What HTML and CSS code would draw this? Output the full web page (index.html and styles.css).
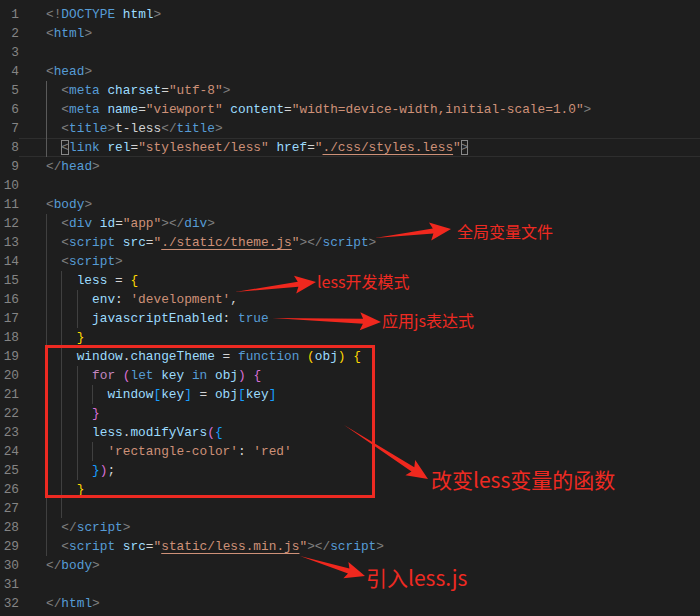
FILE: index.html
```
<!DOCTYPE html>
<html>

<head>
  <meta charset="utf-8">
  <title>t-less</title>
  <link rel="stylesheet" href="styles.css">
</head>

<body>
  <div class="editor">
    <div class="line"><span class="ln">1</span><span class="code"><span class="p">&lt;!</span><span class="t">DOCTYPE</span> <span class="a">html</span><span class="p">&gt;</span></span></div>
    <div class="line"><span class="ln">2</span><span class="code"><span class="p">&lt;</span><span class="t">html</span><span class="p">&gt;</span></span></div>
    <div class="line"><span class="ln">3</span><span class="code"></span></div>
    <div class="line"><span class="ln">4</span><span class="code"><span class="p">&lt;</span><span class="t">head</span><span class="p">&gt;</span></span></div>
    <div class="line"><span class="ln">5</span><span class="code"><i class="g g-on"></i><span class="p">&lt;</span><span class="t">meta</span> <span class="a">charset</span>=<span class="s">"utf-8"</span><span class="p">&gt;</span></span></div>
    <div class="line"><span class="ln">6</span><span class="code"><i class="g g-on"></i><span class="p">&lt;</span><span class="t">meta</span> <span class="a">name</span>=<span class="s">"viewport"</span> <span class="a">content</span>=<span class="s">"width=device-width,initial-scale=1.0"</span><span class="p">&gt;</span></span></div>
    <div class="line"><span class="ln">7</span><span class="code"><i class="g g-on"></i><span class="p">&lt;</span><span class="t">title</span><span class="p">&gt;</span>t-less<span class="p">&lt;/</span><span class="t">title</span><span class="p">&gt;</span></span></div>
    <div class="line cur"><span class="ln">8</span><span class="code"><i class="g g-on"></i><span class="p match">&lt;</span><span class="t">link</span> <span class="a">rel</span>=<span class="s">"stylesheet/less"</span> <span class="a">href</span>=<span class="s">"<span class="u">./css/styles.less</span>"</span><span class="p match">&gt;</span></span></div>
    <div class="line"><span class="ln">9</span><span class="code"><span class="p">&lt;/</span><span class="t">head</span><span class="p">&gt;</span></span></div>
    <div class="line"><span class="ln">10</span><span class="code"></span></div>
    <div class="line"><span class="ln">11</span><span class="code"><span class="p">&lt;</span><span class="t">body</span><span class="p">&gt;</span></span></div>
    <div class="line"><span class="ln">12</span><span class="code"><i class="g"></i><span class="p">&lt;</span><span class="t">div</span> <span class="a">id</span>=<span class="s">"app"</span><span class="p">&gt;&lt;/</span><span class="t">div</span><span class="p">&gt;</span></span></div>
    <div class="line"><span class="ln">13</span><span class="code"><i class="g"></i><span class="p">&lt;</span><span class="t">script</span> <span class="a">src</span>=<span class="s">"<span class="u">./static/theme.js</span>"</span><span class="p">&gt;&lt;/</span><span class="t">script</span><span class="p">&gt;</span></span></div>
    <div class="line"><span class="ln">14</span><span class="code"><i class="g"></i><span class="p">&lt;</span><span class="t">script</span><span class="p">&gt;</span></span></div>
    <div class="line"><span class="ln">15</span><span class="code"><i class="g"></i><i class="g"></i><span class="v">less</span> = <span class="b1">{</span></span></div>
    <div class="line"><span class="ln">16</span><span class="code"><i class="g"></i><i class="g"></i><i class="g"></i><span class="v">env</span>: <span class="s">'development'</span>,</span></div>
    <div class="line"><span class="ln">17</span><span class="code"><i class="g"></i><i class="g"></i><i class="g"></i><span class="v">javascriptEnabled</span>: <span class="k">true</span></span></div>
    <div class="line"><span class="ln">18</span><span class="code"><i class="g"></i><i class="g"></i><span class="b1">}</span></span></div>
    <div class="line"><span class="ln">19</span><span class="code"><i class="g"></i><i class="g"></i><span class="v">window</span>.<span class="v">changeTheme</span> = <span class="k">function</span> <span class="b1">(</span><span class="v">obj</span><span class="b1">)</span> <span class="b1">{</span></span></div>
    <div class="line"><span class="ln">20</span><span class="code"><i class="g"></i><i class="g"></i><i class="g"></i><span class="c">for</span> <span class="b2">(</span><span class="k">let</span> <span class="v">key</span> <span class="k">in</span> <span class="v">obj</span><span class="b2">)</span> <span class="b2">{</span></span></div>
    <div class="line"><span class="ln">21</span><span class="code"><i class="g"></i><i class="g"></i><i class="g"></i><i class="g"></i><span class="v">window</span><span class="b3">[</span><span class="v">key</span><span class="b3">]</span> = <span class="v">obj</span><span class="b3">[</span><span class="v">key</span><span class="b3">]</span></span></div>
    <div class="line"><span class="ln">22</span><span class="code"><i class="g"></i><i class="g"></i><i class="g"></i><span class="b2">}</span></span></div>
    <div class="line"><span class="ln">23</span><span class="code"><i class="g"></i><i class="g"></i><i class="g"></i><span class="v">less</span>.<span class="v">modifyVars</span><span class="b2">(</span><span class="b3">{</span></span></div>
    <div class="line"><span class="ln">24</span><span class="code"><i class="g"></i><i class="g"></i><i class="g"></i><i class="g"></i><span class="s">'rectangle-color'</span>: <span class="s">'red'</span></span></div>
    <div class="line"><span class="ln">25</span><span class="code"><i class="g"></i><i class="g"></i><i class="g"></i><span class="b3">}</span><span class="b2">)</span>;</span></div>
    <div class="line"><span class="ln">26</span><span class="code"><i class="g"></i><i class="g"></i><span class="b1">}</span></span></div>
    <div class="line"><span class="ln">27</span><span class="code"><i class="g"></i><i class="g"></i></span></div>
    <div class="line"><span class="ln">28</span><span class="code"><i class="g"></i><span class="p">&lt;/</span><span class="t">script</span><span class="p">&gt;</span></span></div>
    <div class="line"><span class="ln">29</span><span class="code"><i class="g"></i><span class="p">&lt;</span><span class="t">script</span> <span class="a">src</span>=<span class="s">"<span class="u">static/less.min.js</span>"</span><span class="p">&gt;&lt;/</span><span class="t">script</span><span class="p">&gt;</span></span></div>
    <div class="line"><span class="ln">30</span><span class="code"><span class="p">&lt;/</span><span class="t">body</span><span class="p">&gt;</span></span></div>
    <div class="line"><span class="ln">31</span><span class="code"></span></div>
    <div class="line"><span class="ln">32</span><span class="code"><span class="p">&lt;/</span><span class="t">html</span><span class="p">&gt;</span></span></div>
  </div>

  <!-- red annotations drawn on top of the screenshot -->
  <div class="notes">
    <svg width="700" height="616" viewBox="0 0 700 616">
      <rect x="46.5" y="346.5" width="327" height="150" fill="none" stroke="#ee2a22" stroke-width="3" />
      <g fill="#f0281e">
        <polygon points="375,238 433.4,233.6 431.2,240.4 451,229 429,222.6 432.8,228.6" />
        <polygon points="235,292 298.4,286.7 296.2,293.5 316,282 294,275.7 297.8,281.7" />
        <polygon points="272,318 362.9,323.8 359.7,330.2 381,322 360.3,312.2 363.1,318.8" />
        <polygon points="344,425 411.5,471.4 405.4,475.2 428,479 415.2,460 414.3,467.2" />
        <polygon points="300,556 348,573.4 343.4,578.2 365,576 348.4,562 349.4,568.6" />
      </g>
    </svg>
    <span class="note note-sm n-theme">全局变量文件</span>
    <span class="note note-sm n-dev">less开发模式</span>
    <span class="note note-sm n-js">应用js表达式</span>
    <span class="note note-lg n-fn">改变less变量的函数</span>
    <span class="note note-lg n-lib">引入less.js</span>
  </div>
</body>

</html>
```

FILE: styles.css
```
/* reset */
* {
  margin: 0;
  padding: 0;
  box-sizing: border-box;
}

body {
  position: relative;
  width: 700px;
  height: 616px;
  overflow: hidden;
  background-color: #1e1e1e;
  color: #d4d4d4;
  font-family: "Liberation Mono", "DejaVu Sans Mono", monospace;
  font-size: 12.8px;
}

.editor {
  padding-top: 5px;
}

.line {
  display: flex;
  height: 19px;
  line-height: 19px;
}

.line .ln {
  flex: none;
  width: 19px;
  text-align: right;
  color: #858585;
}

.line .code {
  flex: 1;
  padding-left: 27px;
  white-space: pre;
}

.line.cur .code {
  box-shadow: inset 0 1px #2e2e2e, inset 0 -1px #2e2e2e;
}

/* indent guides */
.g {
  display: inline-block;
  width: 2ch;
  height: 19px;
  vertical-align: top;
  box-shadow: inset 1px 0 #404040;
}

.g.g-on {
  box-shadow: inset 1px 0 #5a5a5a;
}

/* syntax colours */
.p { color: #808080; }
.t { color: #569cd6; }
.a { color: #9cdcfe; }
.s { color: #ce9178; }
.v { color: #9cdcfe; }
.k { color: #569cd6; }
.c { color: #c586c0; }
.b1 { color: #ffd700; }
.b2 { color: #da70d6; }
.b3 { color: #179fff; }

.u {
  text-decoration: underline;
  text-underline-offset: 3px;
}

.match {
  outline: 1px solid #888888;
  outline-offset: -1px;
}

/* annotations */
.notes {
  position: absolute;
  left: 0;
  top: 0;
  width: 700px;
  height: 616px;
  pointer-events: none;
}

.notes svg {
  position: absolute;
  left: 0;
  top: 0;
}

.note {
  position: absolute;
  color: #ee2a22;
  font-family: "Noto Sans CJK SC", sans-serif;
  line-height: 1;
  white-space: nowrap;
}

.note-sm {
  font-size: 16px;
}

.note-lg {
  font-size: 21px;
}

.n-theme { left: 457px; top: 223px; }
.n-dev { left: 317px; top: 273px; }
.n-js { left: 382px; top: 312px; }
.n-fn { left: 431px; top: 469px; }
.n-lib { left: 366px; top: 567px; }
```
